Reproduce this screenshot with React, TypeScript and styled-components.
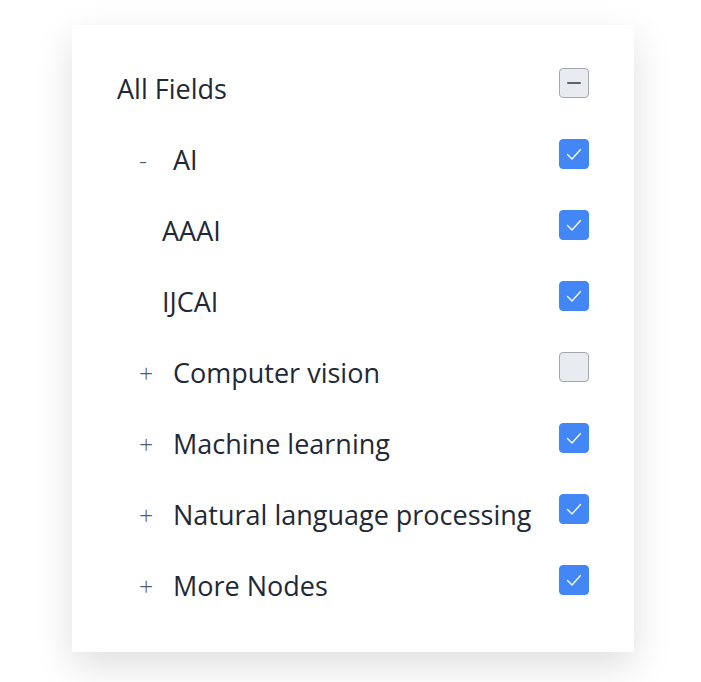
import styled, { createGlobalStyle } from 'styled-components';

const GlobalStyle = createGlobalStyle`
    body {
        margin: 0;
        background: #ffffff;
        font-family: "Open Sans", "Noto Sans", sans-serif;
    }
`

const Page = styled.div`
    width: 701px;
    height: 682px;
    padding: 25px 0 0 72px;
    box-sizing: border-box;
`

const Card = styled.div`
    width: 562px;
    height: 627px;
    box-sizing: border-box;
    background: #ffffff;
    box-shadow: 0 14px 36px rgba(0, 0, 0, 0.13);
    padding: 28px 45px 30px 45px;
    display: flex;
    flex-direction: column;
`

const Row = styled.div<{ $indent: number }>`
    height: 71px;
    display: flex;
    align-items: center;
    padding-left: ${p => p.$indent}px;
`

const Toggle = styled.span`
    width: 34px;
    font-size: 25px;
    color: #575d66;
    font-weight: 300;
`

const Label = styled.span`
    flex: 1;
    font-size: 27px;
    color: #1f2937;
    white-space: nowrap;
`

const Box = styled.span<{ $state: 'on' | 'off' | 'some' }>`
    flex-shrink: 0;
    width: 30px;
    height: 30px;
    box-sizing: border-box;
    border-radius: 4px;
    margin-bottom: 12px;
    display: flex;
    align-items: center;
    justify-content: center;
    background: ${p => (p.$state === 'on' ? '#4287f5' : '#e8ebf0')};
    border: 1px solid ${p => (p.$state === 'on' ? '#4287f5' : '#a3a8b0')};
`

const Dash = styled.span`
    width: 14px;
    height: 2px;
    background: #5b6270;
    border-radius: 1px;
`

const Check = () => (
    <svg width="18" height="18" viewBox="0 0 18 18" fill="none">
        <path d="M2.5 9.5 L7 14 L15.5 4.5" stroke="#ffffff" strokeWidth="1.3" strokeLinecap="round" strokeLinejoin="round" />
    </svg>
)

type Item = { label: string; indent: number; toggle?: string; state: 'on' | 'off' | 'some' }

const items: Item[] = [
    { label: 'All Fields', indent: 0, state: 'some' },
    { label: 'AI', indent: 22, toggle: '-', state: 'on' },
    { label: 'AAAI', indent: 45, state: 'on' },
    { label: 'IJCAI', indent: 45, state: 'on' },
    { label: 'Computer vision', indent: 22, toggle: '+', state: 'off' },
    { label: 'Machine learning', indent: 22, toggle: '+', state: 'on' },
    { label: 'Natural language processing', indent: 22, toggle: '+', state: 'on' },
    { label: 'More Nodes', indent: 22, toggle: '+', state: 'on' },
]

export default function App() {
    return (
        <>
            <GlobalStyle />
            <Page>
                <Card>
                    {items.map(item => (
                        <Row key={item.label} $indent={item.indent}>
                            {item.toggle && <Toggle>{item.toggle}</Toggle>}
                            <Label>{item.label}</Label>
                            <Box $state={item.state}>
                                {item.state === 'on' && <Check />}
                                {item.state === 'some' && <Dash />}
                            </Box>
                        </Row>
                    ))}
                </Card>
            </Page>
        </>
    )
}
